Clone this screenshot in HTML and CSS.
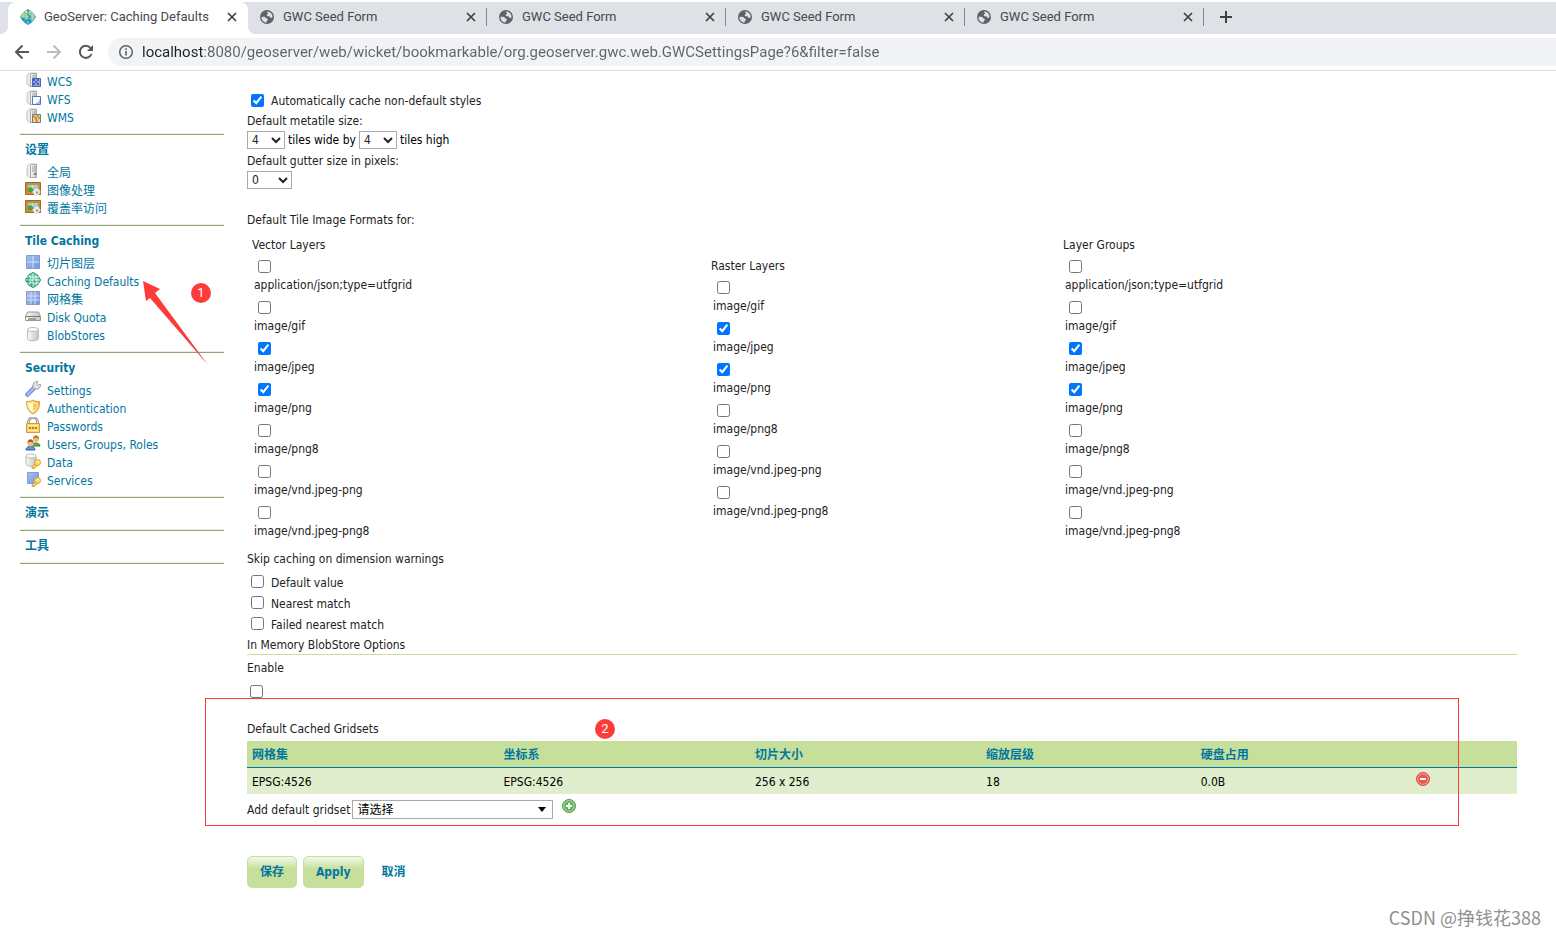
FILE: index.html
```html
<!DOCTYPE html>
<html lang="zh-CN">
<head>
    <meta charset="UTF-8">
    <meta name="viewport" content="width=device-width, initial-scale=1.0">
    <title>GeoServer: Caching Defaults</title>
    <link rel="stylesheet" href="styles.css">
</head>
<body>
    <!-- Shared icons -->
    <svg class="sprite" width="0" height="0" aria-hidden="true">
        <defs>
            <linearGradient id="metal" x1="0" x2="1">
                <stop offset="0" stop-color="#fafafa"/>
                <stop offset="1" stop-color="#c4c4c4"/>
            </linearGradient>
            <linearGradient id="blue" x1="0" x2="1" y1="0" y2="1">
                <stop offset="0" stop-color="#a9c1f0"/>
                <stop offset="1" stop-color="#6f94dc"/>
            </linearGradient>
            <linearGradient id="gold" x1="0" x2="1">
                <stop offset="0" stop-color="#fff0a0"/>
                <stop offset="1" stop-color="#f2b632"/>
            </linearGradient>
            <symbol id="server" viewBox="0 0 16 16">
                <path d="M2 4.500C2 2.500 4 1 6 1h5.500v13.500H5L2 12z" fill="#ededed" stroke="#c2c2c2"/>
                <path d="M5.500 3c0-1 .5-1.500 1.500-1.500h4.500v13h-6z" fill="url(#metal)" stroke="#aaa"/>
                <path d="M7 4h4M7 6h4M7 8h4" stroke="#aaa"/>
            </symbol>
            <symbol id="cylinder" viewBox="0 0 16 16">
                <path d="M2.500 3.500v9c0 3 11 3 11 0v-9" fill="url(#metal)" stroke="#bbb"/>
                <ellipse cx="8" cy="3.500" rx="5.500" ry="2" fill="#fff" stroke="#bbb"/>
            </symbol>
            <symbol id="key" viewBox="0 0 16 16">
                <path d="m11 10-4 4v1.500h2.500v-1.500H11l2-2" fill="#ffd75e" stroke="#d9a03a"/>
                <circle cx="12.500" cy="9.500" r="3" fill="#ffd869" stroke="#d9a03a"/>
                <circle cx="13.300" cy="8.800" r=".8" fill="#fff"/>
            </symbol>
            <symbol id="picture" viewBox="0 0 16 16">
                <path d="M.5 1.500h15v12H.5z" fill="#c98d3c" stroke="#9d6a22"/>
                <path d="M3 4h10v7H3z" fill="#8fd0f5"/>
                <path d="m3 11v-4l3-1 3 3 2-2 2 4z" fill="#4da52d"/>
                <circle cx="7.500" cy="5.500" r="1.200" fill="#ffe24d"/>
                <path d="M11.500 7v8M7.500 11h8M9 8.500l5 5M14 8.500l-5 5" stroke="#dcdcdc" stroke-width="2"/>
                <circle cx="11.500" cy="11" r="3" fill="#ececec"/>
                <circle cx="12" cy="11.500" r="1.200" fill="#b59a72"/>
            </symbol>
            <symbol id="earth" viewBox="0 0 16 16">
                <circle cx="8" cy="8" r="7" fill="#5f6368"/>
                <path d="M2.500 8c2-.3 3.500-.2 4.500 1 .6.800 2 .5 2 1.600 0 1-1.500 1-1.500 2.900C4.500 13.500 2.500 11 2.500 8zM8 2.600c2 0 3.800 1 4.700 2.400.8 1.200.9 2.500.6 3.800-1.300.3-2.300.1-2.600-1-.3-1-1.700-.2-2.500-.8-1-.8-.2-1.700.8-2 .7-.3-1-1-1-2.400z" fill="#dee1e6"/>
            </symbol>
            <symbol id="close" viewBox="0 0 16 16">
                <path d="m4 4 8 8M12 4l-8 8" stroke="#3c4043" stroke-width="1.700"/>
            </symbol>
        </defs>
    </svg>

    <div class="browser">
        <div class="tabs">
            <div class="tab active">
                <svg class="icon" viewBox="0 0 16 16">
                    <path d="M5 2 8 0l3 2 3 3 2 3-2 3-3 3-3 2-3-2-3-3-2-3 2-3z" fill="#1c93c9"/>
                    <path d="m2 5 3-3 2 1v3l2 1-2 4-3-2H1zM9 2h2l3 3 1 4-3 3-2-2 1-3-3-2zM6 12l3 1-1 2z" fill="#b5dc7c"/>
                    <path d="m6 1 2 2-2 2zM11 7l2 1-1 2z" fill="#f0e68a"/>
                    <path d="M4.500 2v12M8.500 1v14M11.500 3v10M1 8.500h14M3 4.500h10" stroke="#55bcd5" stroke-width=".5"/>
                </svg>
                <span class="tab-title">GeoServer: Caching Defaults</span>
                <button class="plain" aria-label="Close tab"><svg class="icon"><use href="#close"/></svg></button>
            </div>
            <div class="tab">
                <svg class="icon"><use href="#earth"/></svg>
                <span class="tab-title">GWC Seed Form</span>
                <button class="plain" aria-label="Close tab"><svg class="icon"><use href="#close"/></svg></button>
            </div>
            <div class="tab">
                <svg class="icon"><use href="#earth"/></svg>
                <span class="tab-title">GWC Seed Form</span>
                <button class="plain" aria-label="Close tab"><svg class="icon"><use href="#close"/></svg></button>
            </div>
            <div class="tab">
                <svg class="icon"><use href="#earth"/></svg>
                <span class="tab-title">GWC Seed Form</span>
                <button class="plain" aria-label="Close tab"><svg class="icon"><use href="#close"/></svg></button>
            </div>
            <div class="tab">
                <svg class="icon"><use href="#earth"/></svg>
                <span class="tab-title">GWC Seed Form</span>
                <button class="plain" aria-label="Close tab"><svg class="icon"><use href="#close"/></svg></button>
            </div>
            <button class="plain new-tab" aria-label="New tab">
                <svg class="icon" viewBox="0 0 16 16"><path d="M8 2v12M2 8h12" stroke="#3c4043" stroke-width="2"/></svg>
            </button>
        </div>
        <div class="toolbar">
            <button class="plain" aria-label="Back">
                <svg class="icon" viewBox="0 0 16 16" fill="none" stroke="#54585d" stroke-width="2"><path d="M15 8H2M8.500 1.500 2 8l6.500 6.500"/></svg>
            </button>
            <button class="plain" aria-label="Forward">
                <svg class="icon" viewBox="0 0 16 16" fill="none" stroke="#babcbe" stroke-width="2"><path d="M1 8h13M7.500 1.500 14 8l-6.500 6.500"/></svg>
            </button>
            <button class="plain" aria-label="Reload">
                <svg class="icon" viewBox="0 0 16 16"><path d="M13.500 10A6 6 0 1 1 12.500 4" fill="none" stroke="#54585d" stroke-width="2"/><path d="M15 1v6H9z" fill="#54585d"/></svg>
            </button>
            <div class="address">
                <svg class="icon" viewBox="0 0 16 16"><circle cx="8" cy="8" r="6.300" fill="none" stroke="#5f6368" stroke-width="1.500"/><path d="M8 7v4.500M8 4.300v1.700" stroke="#5f6368" stroke-width="1.600"/></svg>
                <input class="url" type="text" aria-label="Address" value="localhost:8080/geoserver/web/wicket/bookmarkable/org.geoserver.gwc.web.GWCSettingsPage?6&amp;filter=false">
            </div>
        </div>
    </div>

    <div class="page">
        <nav class="sidebar">
            <section class="menu services">
                <ul>
                    <li><a href="#"><svg class="icon" viewBox="0 0 16 16"><use href="#server"/><path d="M7.500 6.500h8v8h-8z" fill="#8fa9e8" stroke="#4a62ae"/><path d="M8 7h2v2H8zM12 7h2v2h-2zM10 9h2v2h-2zM8 11h2v2H8zM12 11h2v2h-2z" fill="#4864b4"/></svg>WCS</a></li>
                    <li><a href="#"><svg class="icon" viewBox="0 0 16 16"><use href="#server"/><path d="M7.500 6.500h8v8h-8z" fill="#fff" stroke="#5a74b8"/><path d="M8 14c4 0 7-3 7-7v7z" fill="#9dbcf0"/></svg>WFS</a></li>
                    <li><a href="#"><svg class="icon" viewBox="0 0 16 16"><use href="#server"/><path d="M7.500 6.500h8v8h-8z" fill="#ffd75e" stroke="#6b76a6"/><path d="m8 8 3 2 1 4" fill="none" stroke="#e0602a" stroke-width="1.500"/><path d="m12 7 3 4" stroke="#7cb36a" stroke-width="2"/></svg>WMS</a></li>
                </ul>
            </section>
            <section class="menu">
                <h2><a href="#">设置</a></h2>
                <ul>
                    <li><a href="#"><svg class="icon" viewBox="0 0 16 16"><use href="#server"/><path d="M9 11h2" stroke="#3fa535" stroke-width="2"/></svg>全局</a></li>
                    <li><a href="#"><svg class="icon"><use href="#picture"/></svg>图像处理</a></li>
                    <li><a href="#"><svg class="icon"><use href="#picture"/></svg>覆盖率访问</a></li>
                </ul>
            </section>
            <section class="menu marked">
                <h2><a href="#">Tile Caching</a></h2>
                <ul>
                    <li><a href="#"><svg class="icon" viewBox="0 0 16 16"><path d="M1.500 1.500h13v13h-13z" fill="url(#blue)" stroke="#7f9bd9"/><path d="M8 2v12M2 8h12" stroke="#d5e0f8"/></svg>切片图层</a></li>
                    <li><a href="#"><svg class="icon" viewBox="0 0 16 16"><path d="m8 .5 4.500 2.500 3 5-3 5L8 15.500 3.500 13l-3-5 3-5z" fill="#5cc795" stroke="#16816a"/><path d="M5 2.500v11M8 1v14M11 2.500v11M2 5h12M1 8h14M2 11h12" stroke="#fff" stroke-width=".8"/><path d="M3 5.500h1.500v2H3zM8.500 8.500h2v2h-2zM5.500 11.500h2v2h-2zM1.500 8.500h3v2H3z" fill="#1b9c91"/></svg>Caching Defaults</a></li>
                    <li><a href="#"><svg class="icon" viewBox="0 0 16 16"><path d="M1.500 1.500h13v13h-13z" fill="url(#blue)" stroke="#7f9bd9"/><path d="M6 2v12M10 2v12M2 6h12M2 10h12" stroke="#d5e0f8"/></svg>网格集</a></li>
                    <li><a href="#"><svg class="icon" viewBox="0 0 16 16"><path d="m.5 8.500 2-4.500h11l2 4.500v4H.5z" fill="url(#metal)" stroke="#999"/><path d="M1 8.500h14" stroke="#777"/><path d="M3 11h8" stroke="#888" stroke-width="1.500"/></svg>Disk Quota</a></li>
                    <li><a href="#"><svg class="icon"><use href="#cylinder"/></svg>BlobStores</a></li>
                </ul>
                <span class="badge badge-one">1</span>
                <svg class="arrow" viewBox="0 0 66 84"><path d="M0 0 17 8l-5 4 53 72L7 17l-4 3z" fill="#fd3b38"/></svg>
            </section>
            <section class="menu">
                <h2><a href="#">Security</a></h2>
                <ul>
                    <li><a href="#"><svg class="icon" viewBox="0 0 16 16"><path d="m2.500 13.500 7-7" stroke="#5b7fc7" stroke-width="4.500" stroke-linecap="round"/><path d="m2.500 13.500 7-7" stroke="#9fbbef" stroke-width="2.500" stroke-linecap="round"/><path d="M8 7V3l2.500-2.500L13 .8 11.500 3l1.500 1.500L15.300 3l.2 2.500L13 8H9z" fill="#e3e3e3" stroke="#909090" stroke-width=".8"/></svg>Settings</a></li>
                    <li><a href="#"><svg class="icon" viewBox="0 0 16 16"><path d="M1.500 2.500c3 .5 5-.5 6.500-1.500 1.500 1 3.500 2 6.500 1.500 0 6-1.500 10-6.500 12.500-5-2.500-6.500-6.500-6.500-12.500z" fill="url(#gold)" stroke="#daa13a"/><path d="M3.500 4.500c2 0 3.500-.5 4.500-1.500v10c-3-2-4.500-4.500-4.500-8.500z" fill="#fffce0"/><path d="M8 3c1 1 2.500 1.500 4.500 1.500 0 4-1.500 6.500-4.500 8.500" fill="none" stroke="#fff3b5"/></svg>Authentication</a></li>
                    <li><a href="#"><svg class="icon" viewBox="0 0 16 16"><path d="M3.500 7V4.500c0-5 9-5 9 0V7" fill="none" stroke="#8c8c8c" stroke-width="2.500"/><path d="M3.500 7V4.500c0-5 9-5 9 0V7" fill="none" stroke="#ddd"/><path d="M1.500 6.500h13v9h-13z" fill="#fbd668" stroke="#d29a3a"/><path d="M3 8.500h10M3 13.500h10" stroke="#fff0ae"/><path d="M4 10h2v2H4zM7 10h2v2H7zM10 10h2v2h-2z" fill="#b97f28"/></svg>Passwords</a></li>
                    <li><a href="#"><svg class="icon" viewBox="0 0 16 16"><path d="M7 11c0-4 8-4 8 0z" fill="#69ae52" stroke="#3d7d2d"/><circle cx="11" cy="4" r="3" fill="#f0b875"/><path d="M8 4c0-5 6-5 6 0-2-1-4-2-6 0" fill="#b97829"/><path d="M1 15c0-5 9-5 9 0z" fill="#6694da" stroke="#365faa"/><circle cx="5.500" cy="8.500" r="3" fill="#f2bd80"/><path d="M2.500 8c0-5 6-5 6 0-2-1-4-2-6 0" fill="#925921"/></svg>Users, Groups, Roles</a></li>
                    <li><a href="#"><svg class="icon" viewBox="0 0 16 16"><path d="M1 3v8c0 3 10 3 10 0V3" fill="url(#metal)" stroke="#bbb"/><ellipse cx="6" cy="3" rx="5" ry="2" fill="#fff" stroke="#bbb"/><use href="#key"/></svg>Data</a></li>
                    <li><a href="#"><svg class="icon" viewBox="0 0 16 16"><path d="M2.500 1.500h11v11h-11z" fill="url(#blue)" stroke="#7f9bd9"/><use href="#key"/></svg>Services</a></li>
                </ul>
            </section>
            <section class="menu"><h2><a href="#">演示</a></h2></section>
            <section class="menu"><h2><a href="#">工具</a></h2></section>
        </nav>

        <main>
            <div class="row check-row"><input type="checkbox" id="autoCache" checked><label for="autoCache">Automatically cache non-default styles</label></div>
            <div class="row"><label for="metaWide">Default metatile size:</label></div>
            <div class="row meta">
                <select id="metaWide" class="small-select"><option>4</option></select>
                <label for="metaWide">tiles wide by</label>
                <select id="metaHigh" class="small-select"><option>4</option></select>
                <label for="metaHigh">tiles high</label>
            </div>
            <div class="row"><label for="gutter">Default gutter size in pixels:</label></div>
            <div class="row gutter"><select id="gutter" class="small-select wide"><option>0</option></select></div>

            <p class="formats-title">Default Tile Image Formats for:</p>
            <div class="formats">
                <div class="format-column">
                    <h3>Vector Layers</h3>
                    <div class="format"><input type="checkbox" id="v1"><label for="v1">application/json;type=utfgrid</label></div>
                    <div class="format"><input type="checkbox" id="v2"><label for="v2">image/gif</label></div>
                    <div class="format"><input type="checkbox" id="v3" checked><label for="v3">image/jpeg</label></div>
                    <div class="format"><input type="checkbox" id="v4" checked><label for="v4">image/png</label></div>
                    <div class="format"><input type="checkbox" id="v5"><label for="v5">image/png8</label></div>
                    <div class="format"><input type="checkbox" id="v6"><label for="v6">image/vnd.jpeg-png</label></div>
                    <div class="format"><input type="checkbox" id="v7"><label for="v7">image/vnd.jpeg-png8</label></div>
                </div>
                <div class="format-column">
                    <h3>Raster Layers</h3>
                    <div class="format"><input type="checkbox" id="r1"><label for="r1">image/gif</label></div>
                    <div class="format"><input type="checkbox" id="r2" checked><label for="r2">image/jpeg</label></div>
                    <div class="format"><input type="checkbox" id="r3" checked><label for="r3">image/png</label></div>
                    <div class="format"><input type="checkbox" id="r4"><label for="r4">image/png8</label></div>
                    <div class="format"><input type="checkbox" id="r5"><label for="r5">image/vnd.jpeg-png</label></div>
                    <div class="format"><input type="checkbox" id="r6"><label for="r6">image/vnd.jpeg-png8</label></div>
                </div>
                <div class="format-column">
                    <h3>Layer Groups</h3>
                    <div class="format"><input type="checkbox" id="g1"><label for="g1">application/json;type=utfgrid</label></div>
                    <div class="format"><input type="checkbox" id="g2"><label for="g2">image/gif</label></div>
                    <div class="format"><input type="checkbox" id="g3" checked><label for="g3">image/jpeg</label></div>
                    <div class="format"><input type="checkbox" id="g4" checked><label for="g4">image/png</label></div>
                    <div class="format"><input type="checkbox" id="g5"><label for="g5">image/png8</label></div>
                    <div class="format"><input type="checkbox" id="g6"><label for="g6">image/vnd.jpeg-png</label></div>
                    <div class="format"><input type="checkbox" id="g7"><label for="g7">image/vnd.jpeg-png8</label></div>
                </div>
            </div>

            <p class="skip-title">Skip caching on dimension warnings</p>
            <div class="skip">
                <div class="check-row"><input type="checkbox" id="skipDefault"><label for="skipDefault">Default value</label></div>
                <div class="check-row"><input type="checkbox" id="skipNearest"><label for="skipNearest">Nearest match</label></div>
                <div class="check-row"><input type="checkbox" id="skipFailed"><label for="skipFailed">Failed nearest match</label></div>
            </div>

            <p class="legend">In Memory BlobStore Options</p>
            <div class="enable"><label for="enable">Enable</label><input type="checkbox" id="enable"></div>

            <section class="gridsets">
                <p>Default Cached Gridsets</p>
                <table>
                    <thead>
                        <tr>
                            <th class="col-name"><a href="#">网格集</a></th>
                            <th class="col-name"><a href="#">坐标系</a></th>
                            <th class="col-size"><a href="#">切片大小</a></th>
                            <th class="col-zoom"><a href="#">缩放层级</a></th>
                            <th class="col-zoom"><a href="#">硬盘占用</a></th>
                            <th></th>
                        </tr>
                    </thead>
                    <tbody>
                        <tr>
                            <td>EPSG:4526</td>
                            <td>EPSG:4526</td>
                            <td>256 x 256</td>
                            <td>18</td>
                            <td>0.0B</td>
                            <td>
                                <button class="plain" aria-label="Remove gridset">
                                    <svg class="icon" viewBox="0 0 16 16"><circle cx="8" cy="8" r="6.500" fill="#e9574d" stroke="#d0564f"/><circle cx="8" cy="8" r="5.300" fill="none" stroke="#f5a79e"/><path d="M5 8h6" stroke="#fff" stroke-width="2"/></svg>
                                </button>
                            </td>
                        </tr>
                    </tbody>
                </table>
                <div class="add-gridset">
                    <label for="addGridset">Add default gridset</label>
                    <select id="addGridset"><option>请选择</option></select>
                    <button class="plain" aria-label="Add gridset">
                        <svg class="icon" viewBox="0 0 16 16"><circle cx="8" cy="8" r="6.500" fill="#62b558" stroke="#4f9f4c"/><circle cx="8" cy="8" r="5.300" fill="none" stroke="#b0dca6"/><path d="M5 8h6M8 5v6" stroke="#fff" stroke-width="2"/></svg>
                    </button>
                </div>
                <span class="badge badge-two">2</span>
                <div class="highlight"></div>
            </section>

            <div class="actions">
                <button class="action">保存</button>
                <button class="action">Apply</button>
                <a href="#">取消</a>
            </div>
        </main>
    </div>
    <div class="watermark">CSDN @挣钱花388</div>
</body>
</html>
```
FILE: styles.css
```css
:root {
    --link: #0076a1;
    --text: #222;
    --green: #c6df9b;
    --green-light: #e1eecd;
    --mark: #fd3b38;
    --ui-font: Roboto, "Noto Sans CJK SC", sans-serif;
}

* {
    box-sizing: border-box;
}

body {
    margin: 0;
    min-height: 100vh;
    position: relative;
    background: white;
    color: var(--text);
    font-family: "DejaVu Sans Condensed", "Noto Sans CJK SC", sans-serif;
    font-size: 12px;
    line-height: 18px;
}

h2, h3, p, ul {
    margin: 0;
    padding: 0;
    font-size: 12px;
}

ul {
    list-style: none;
}

a {
    color: var(--link);
    text-decoration: none;
}

input[type="checkbox"] {
    width: 13px;
    height: 13px;
    margin: 0;
    flex: none;
}

select {
    font: inherit;
    color: var(--text);
    background-color: white;
    border: 1px solid #aaa;
    border-radius: 0;
}

.sprite {
    position: absolute;
}

.icon {
    width: 16px;
    height: 16px;
    display: block;
    flex: none;
}

.plain {
    border: 0;
    padding: 0;
    background: none;
}

/* Browser frame */
.browser {
    border-bottom: 1px solid #dadce0;
    font-family: var(--ui-font);
}

.tabs {
    display: flex;
    height: 34px;
    padding-left: 8px;
    background: #dee1e6;
    border-top: 2px solid white;
}

.tab {
    display: flex;
    align-items: center;
    gap: 8px;
    width: 239px;
    padding: 0 8px 2px 11px;
    color: #45494d;
    font-size: 13px;
    position: relative;
}

.tab.active {
    width: 240px;
    padding-left: 12px;
    background: white;
    border-radius: 8px 8px 0 0;
}

.tab.active::before,
.tab.active::after {
    content: "";
    position: absolute;
    bottom: 0;
    width: 8px;
    height: 8px;
}

.tab.active::before {
    left: -8px;
    background: radial-gradient(circle at top left, transparent 8px, white 8px);
}

.tab.active::after {
    right: -8px;
    background: radial-gradient(circle at top right, transparent 8px, white 8px);
}

.tab:not(.active)::after {
    content: "";
    position: absolute;
    right: 0;
    top: 6px;
    height: 18px;
    border-right: 1px solid #85898e;
}

.tab-title {
    flex: 1;
    white-space: nowrap;
}

.new-tab {
    padding: 0 14px 2px;
}

.toolbar {
    display: flex;
    align-items: center;
    gap: 16px;
    height: 36px;
    padding-left: 14px;
}

.address {
    flex: 1;
    display: flex;
    align-items: center;
    gap: 8px;
    height: 28px;
    margin-left: -2px;
    padding-left: 10px;
    background: #f1f3f4;
    border-radius: 14px 0 0 14px;
}

/* host part is darker than the path */
.url {
    flex: 1;
    border: 0;
    padding: 0;
    outline: none;
    font-family: var(--ui-font);
    font-size: 15px;
    color: transparent;
    background: linear-gradient(to right, #202124 62px, #5f6368 62px);
    background-clip: text;
    -webkit-background-clip: text;
}

/* Page */
.page {
    display: flex;
    gap: 23px;
    padding: 0 39px 0 20px;
}

.sidebar {
    width: 204px;
    flex: none;
}

.menu {
    padding: 6px 5px 7px;
    border-bottom: 1px solid #94a37e;
    box-shadow: inset 0 -1px #e9efdd;
}

.menu.services {
    padding-top: 2px;
}

.menu.services ul {
    margin-top: 0;
}

.menu.marked {
    position: relative;
}

.menu h2 {
    line-height: 19px;
}

.menu ul {
    margin-top: 4px;
}

.menu li a {
    display: flex;
    gap: 6px;
    height: 18px;
}

.menu .icon {
    margin-top: -1px;
}

.badge {
    position: absolute;
    width: 20px;
    height: 20px;
    border-radius: 50%;
    background: var(--mark);
    color: white;
    font-family: var(--ui-font);
    font-size: 13px;
    line-height: 20px;
    text-align: center;
}

.badge-one {
    left: 171px;
    top: 57px;
}

.badge-two {
    left: 348px;
    top: 0;
}

.menu .arrow {
    position: absolute;
    left: 123px;
    top: 55px;
    width: 66px;
    height: 84px;
}

main {
    flex: 1;
    padding-top: 19px;
}

.row {
    display: flex;
    align-items: center;
    height: 20px;
}

.row label,
.check-row label {
    padding-top: 2px;
}

.check-row {
    display: flex;
    align-items: center;
    gap: 7px;
    padding-left: 4px;
}

.meta {
    gap: 3px;
    color: black;
}

.meta label {
    padding-top: 0;
}

.gutter {
    height: 19px;
}

.small-select {
    width: 38px;
    height: 18px;
}

.small-select.wide {
    width: 45px;
}

.formats-title {
    margin-top: 22px;
}

.formats {
    display: grid;
    grid-template-columns: 459fr 352fr 459fr;
    align-items: center;
    margin-top: 6px;
}

.format-column {
    padding-left: 5px;
}

.format-column h3 {
    font-weight: normal;
    line-height: 20px;
}

.format {
    padding: 5px 0 1px 2px;
}

.format input {
    display: block;
    margin-left: 4px;
}

.format label {
    display: block;
    line-height: 19px;
    margin-top: 3px;
}

.skip-title {
    margin-top: 8px;
}

.skip {
    padding-top: 3px;
}

.skip .check-row {
    height: 21px;
}

.legend {
    padding-top: 3px;
    border-bottom: 1px solid var(--green);
    line-height: 17px;
}

.enable {
    padding-top: 4px;
}

.enable label {
    display: block;
}

.enable input {
    display: block;
    margin: 8px 0 0 3px;
}

.gridsets {
    position: relative;
    margin-top: 21px;
}

.gridsets p {
    line-height: 20px;
    padding-bottom: 2px;
}

table {
    width: 100%;
    table-layout: fixed;
    border-collapse: collapse;
    color: black;
}

th, td {
    height: 26px;
    padding: 2px 5px 0;
    text-align: left;
}

th {
    background: var(--green);
    border-bottom: 1px solid var(--link);
}

td {
    height: 27px;
    background: var(--green-light);
}

.col-name {
    width: 19.8%;
}

.col-size {
    width: 18.2%;
}

.col-zoom {
    width: 16.9%;
}

.add-gridset {
    display: flex;
    align-items: center;
    gap: 2px;
    height: 30px;
}

.add-gridset label {
    padding-top: 2px;
}

.add-gridset select {
    appearance: none;
    width: 201px;
    height: 19px;
    padding: 0 4px;
    color: black;
    background: white url("data:image/svg+xml,%3Csvg xmlns='http://www.w3.org/2000/svg' width='8' height='5'%3E%3Cpath d='M0 0h8L4 5z'/%3E%3C/svg%3E") no-repeat right 6px center;
}

.add-gridset button {
    margin: 0 0 6px 6px;
}

.highlight {
    position: absolute;
    left: -42px;
    right: 58px;
    top: -21px;
    bottom: -2px;
    border: 1px solid var(--mark);
    pointer-events: none;
}

.actions {
    display: flex;
    align-items: center;
    gap: 6px;
    padding: 32px 0;
    font-weight: bold;
}

.action {
    height: 32px;
    padding: 0 12px;
    border: 1px solid var(--green);
    border-radius: 5px;
    background: linear-gradient(#f2f8e7, var(--green) 12px);
    color: var(--link);
    font: inherit;
}

.actions a {
    padding: 0 12px;
}

.watermark {
    position: absolute;
    right: 15px;
    bottom: 7px;
    color: #909090;
    font-family: "Noto Sans CJK SC", sans-serif;
    font-size: 18px;
    line-height: 24px;
}
```
